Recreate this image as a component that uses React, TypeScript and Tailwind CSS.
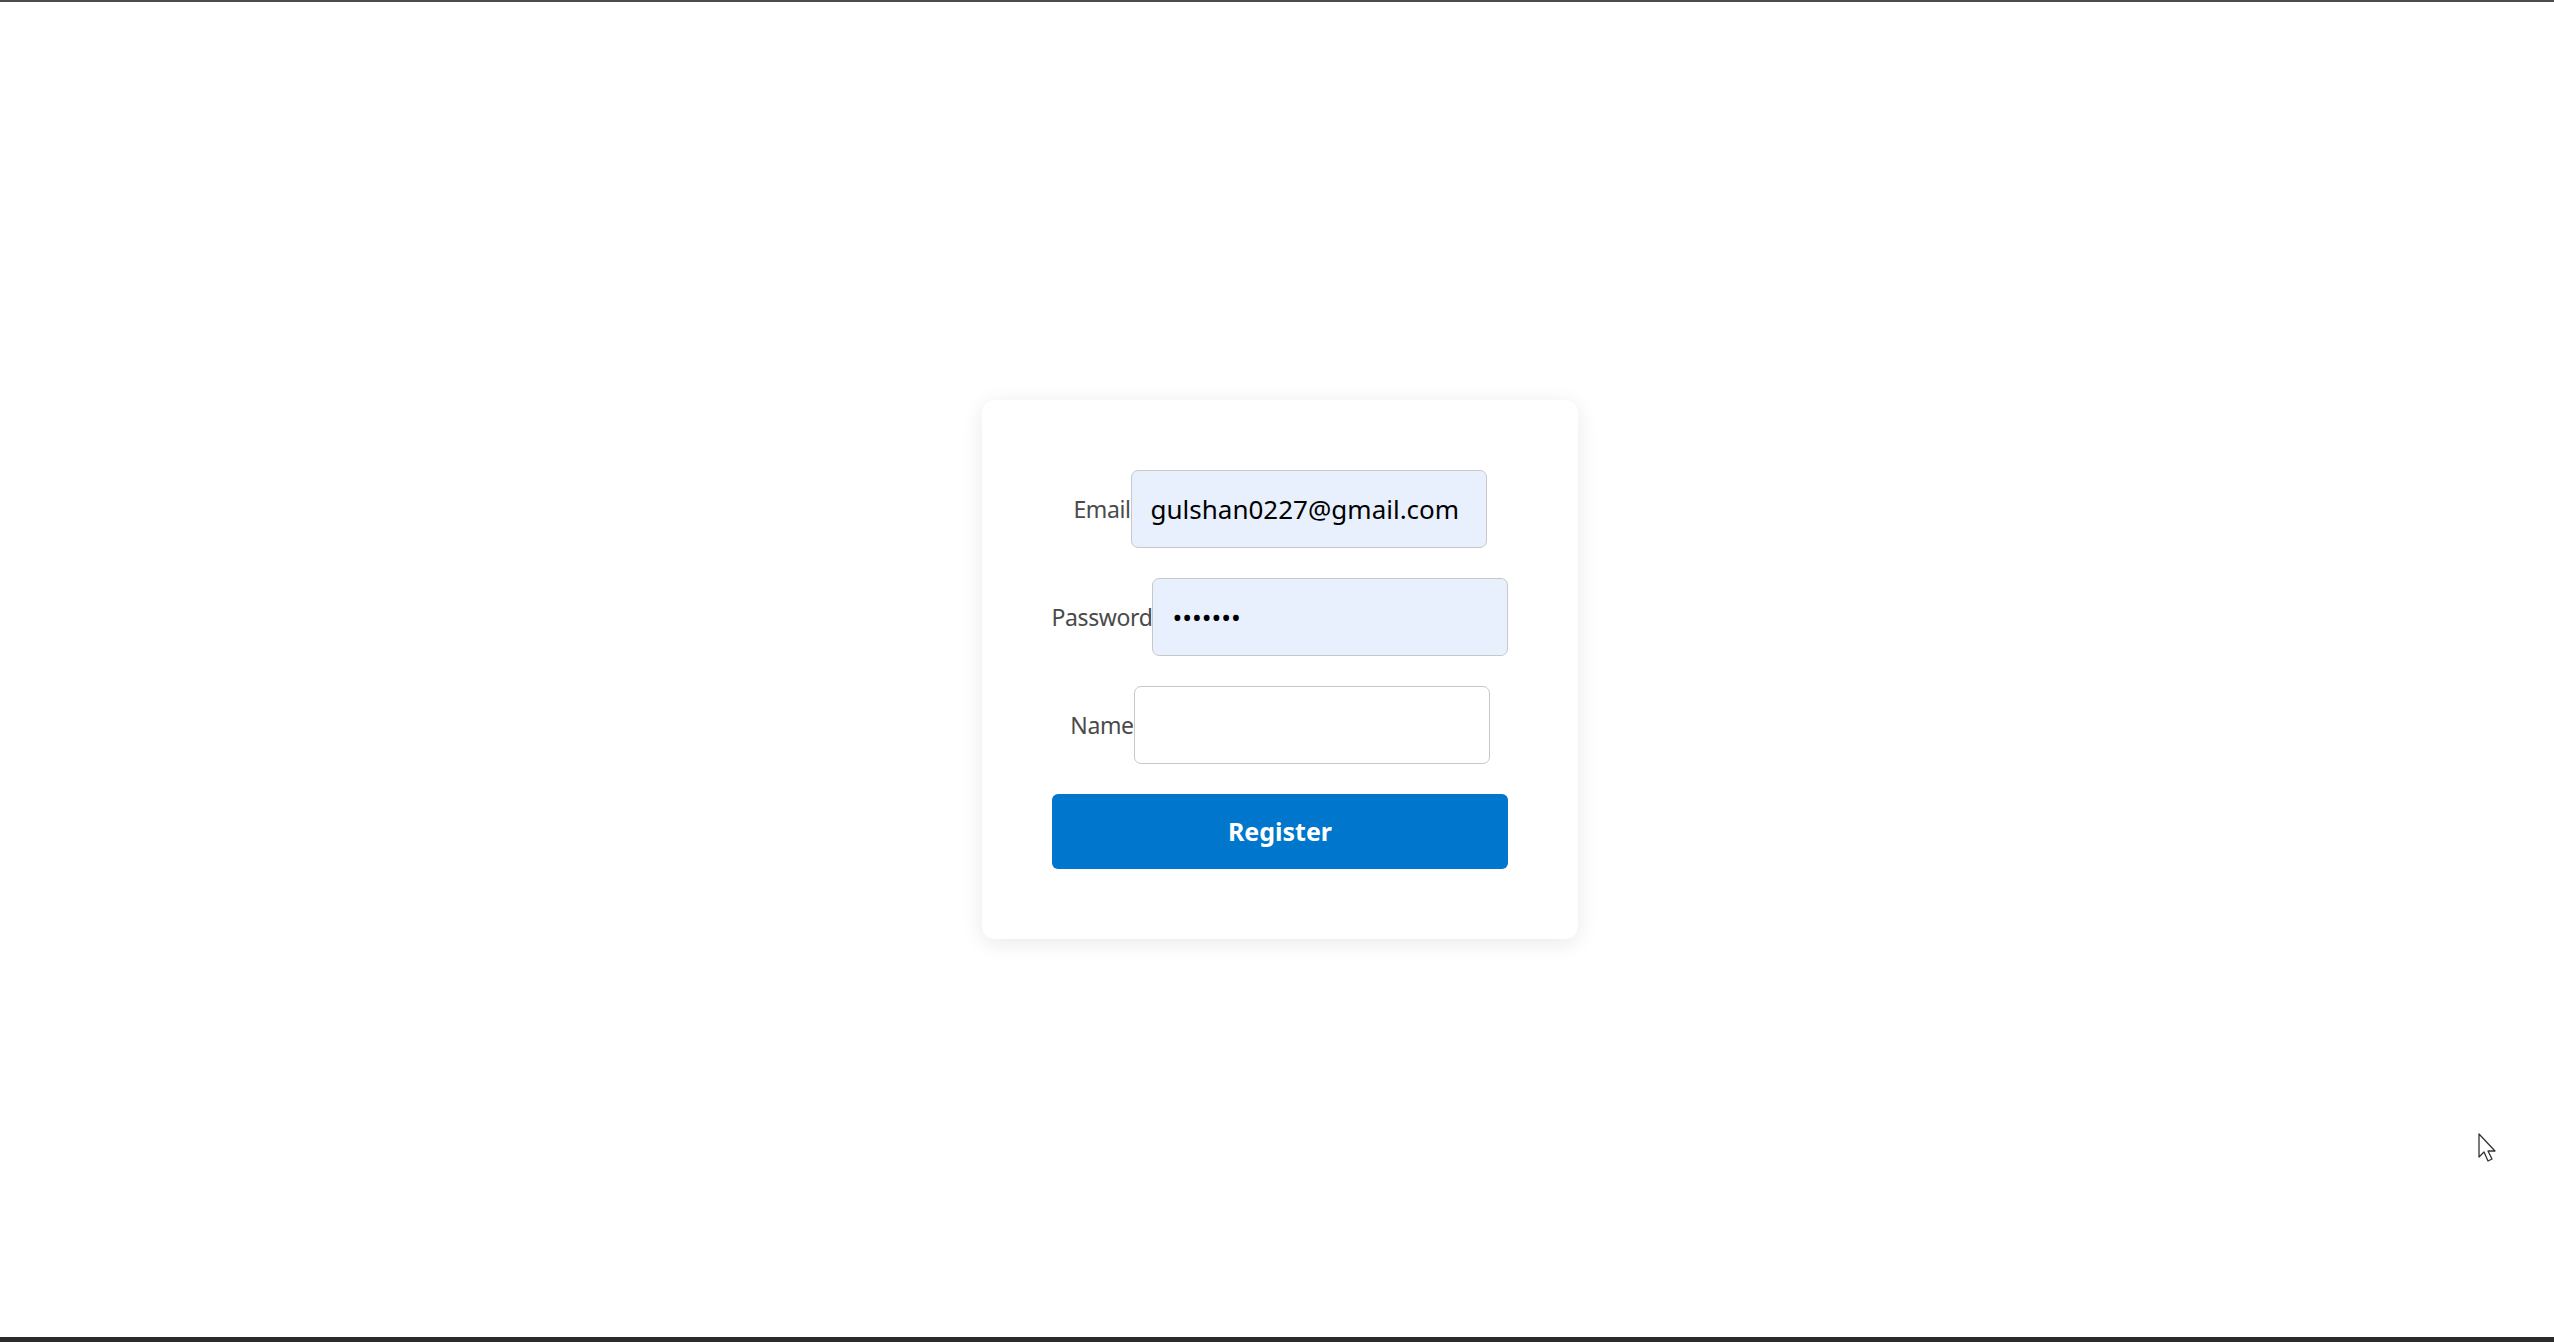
import React from "react"

// Simple register form, centered card
const fieldBase =
  "h-[78px] w-[356px] rounded-[7px] border border-[#c8c8c8] px-[19px] text-[26px] text-black outline-none"

function Field({ label, type, value, filled }: { label: string; type: string; value: string; filled?: boolean }) {
  return (
    <div className="flex items-center justify-center">
      <label className="text-[23px] leading-none tracking-[-0.4px] text-[#4a4a4a]">{label}</label>
      <input
        type={type}
        defaultValue={value}
        className={filled ? `${fieldBase} bg-[#e8f0fe]` : `${fieldBase} bg-white`}
      />
    </div>
  )
}

export default function App() {
  return (
    <div
      className="relative flex h-screen w-full flex-col bg-white"
      style={{ fontFamily: '"Noto Sans", "Open Sans", sans-serif' }}
    >
      <div className="h-[2px] w-full bg-[#4d4d4d]" />
      <main className="flex flex-1 items-center justify-center pl-[6px]">
        <div className="w-[596px] rounded-[13px] bg-white p-[70px] shadow-[0_4px_22px_rgba(0,0,0,0.09)]">
          <form className="flex flex-col gap-[30px]" onSubmit={(e) => e.preventDefault()}>
            <Field label="Email" type="email" value="gulshan0227@gmail.com" filled />
            <Field label="Password" type="password" value="1234567" filled />
            <Field label="Name" type="text" value="" />
            <button
              type="submit"
              className="h-[75px] w-full rounded-[6px] bg-[#0077cc] text-[25px] font-bold text-white"
            >
              Register
            </button>
          </form>
        </div>
      </main>
      <div className="h-[5px] w-full bg-[#2c2a2c]" />

      {/* mouse pointer */}
      <svg
        className="absolute left-[2478px] top-[1133px]"
        width="22"
        height="30"
        viewBox="0 0 22 30"
        fill="none"
      >
        <path
          d="M1 1 L1 24 L6 19 L10 28 L14 26 L10 18 L17 18 Z"
          fill="#ffffff"
          stroke="#333333"
          strokeWidth="1.3"
          strokeLinejoin="round"
        />
      </svg>
    </div>
  )
}
